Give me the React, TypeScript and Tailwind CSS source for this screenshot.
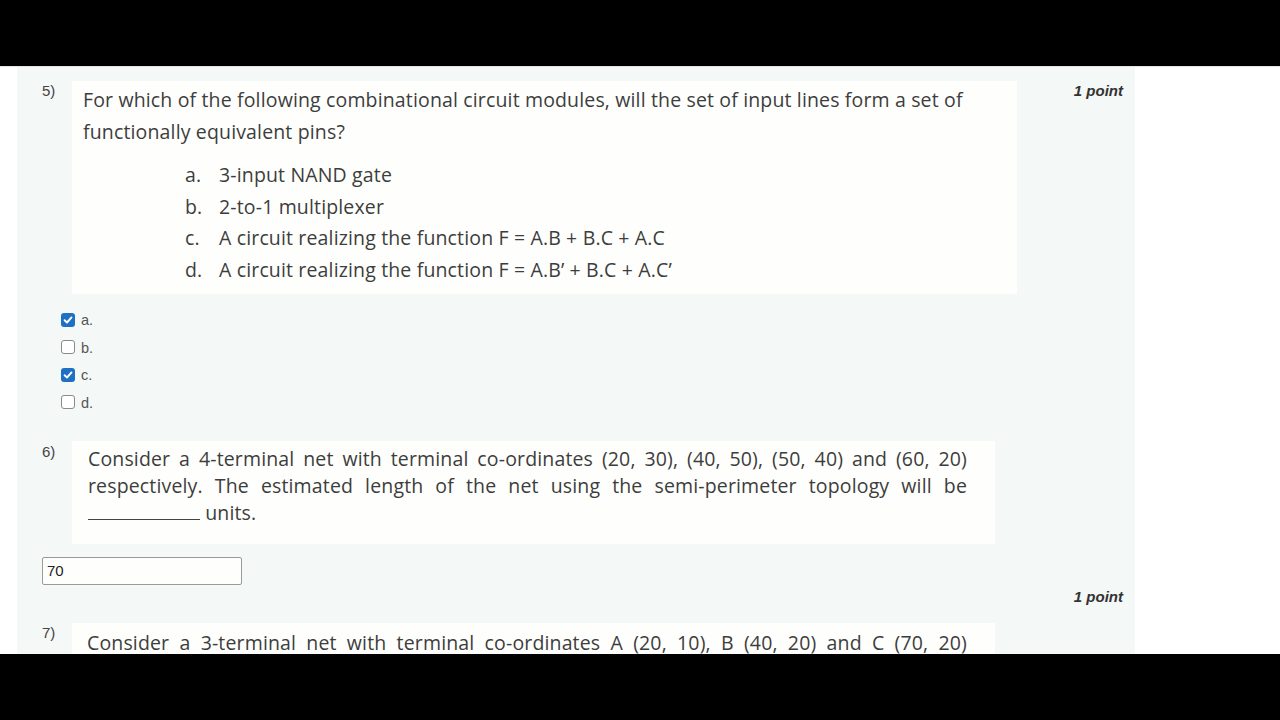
import React from 'react'

const serif = { fontFamily: '"Open Sans", "Noto Sans", sans-serif' }

function Check({ checked }: { checked: boolean }) {
  if (checked) {
    return (
      <span className="w-[14px] h-[14px] rounded-[3px] bg-[#1f6fc4] flex items-center justify-center">
        <svg width="10" height="10" viewBox="0 0 10 10">
          <path d="M1.6 5.2 L4 7.5 L8.5 2.4" stroke="white" strokeWidth="1.9" fill="none" strokeLinecap="round" strokeLinejoin="round" />
        </svg>
      </span>
    )
  }
  return <span className="w-[14px] h-[14px] rounded-[3px] bg-white border border-[#8a8a8a]" />
}

export default function App() {
  const options = [
    ['a.', '3-input NAND gate'],
    ['b.', '2-to-1 multiplexer'],
    ['c.', 'A circuit realizing the function F = A.B + B.C + A.C'],
    ['d.', 'A circuit realizing the function F = A.B’ + B.C + A.C’'],
  ]
  const answers = [
    ['a.', true],
    ['b.', false],
    ['c.', true],
    ['d.', false],
  ] as const

  return (
    <div className="w-[1280px] h-[720px] bg-black flex flex-col overflow-hidden">
      <div className="h-[66px] shrink-0" />
      <div className="h-[588px] shrink-0 bg-white flex overflow-hidden border-t border-[#e3e6e5]">
        <div className="w-[17px] shrink-0" />
        <div className="w-[1118px] shrink-0 bg-[#f4f8f6] pt-[14px] text-[#3d3d3d]" style={{ fontFamily: '"Liberation Sans", Arial, sans-serif' }}>
          {/* Question 5 */}
          <div className="flex items-start">
            <div className="w-[55px] shrink-0 pl-[25px] pt-[2px] text-[15px] leading-4 text-[#444]">5)</div>
            <div className="w-[945px] shrink-0 bg-[#fefffc] pl-[11px] pt-[3px] pb-[9px] text-[19.5px] tracking-[0.15px]" style={serif}>
              <div className="leading-[32px] whitespace-nowrap">
                For which of the following combinational circuit modules, will the set of input lines form a set of
              </div>
              <div className="leading-[32px] whitespace-nowrap">functionally equivalent pins?</div>
              <div className="mt-[11px] pl-[102px]">
                {options.map(([m, t]) => (
                  <div key={m} className="h-[31.5px] flex items-center whitespace-nowrap">
                    <span className="w-[34px]">{m}</span>
                    <span>{t}</span>
                  </div>
                ))}
              </div>
            </div>
            <div className="flex-1 text-right pr-[12px] pt-[2px] text-[15px] leading-4 font-bold italic text-[#333]">1 point</div>
          </div>

          {/* Answers for 5 */}
          <div className="mt-3 pl-[44px]">
            {answers.map(([l, c]) => (
              <div key={l} className="h-[27.5px] flex items-center gap-[6px]">
                <Check checked={c} />
                <span className="text-[14.5px] text-[#555] pt-[3px]">{l}</span>
              </div>
            ))}
          </div>

          {/* Question 6 */}
          <div className="mt-[25px] flex items-start">
            <div className="w-[55px] shrink-0 pl-[25px] pt-[3px] text-[15px] leading-4 text-[#444]">6)</div>
            <div className="w-[923px] shrink-0 bg-[#fefffc] pl-[16px] pr-[28px] pt-[3.5px] pb-[18.5px] text-[19.5px] leading-[27px] tracking-[0.15px]" style={serif}>
              <div className="[text-align-last:justify] whitespace-nowrap">
                Consider a 4-terminal net with terminal co-ordinates (20, 30), (40, 50), (50, 40) and (60, 20)
              </div>
              <div className="[text-align-last:justify] whitespace-nowrap">
                respectively. The estimated length of the net using the semi-perimeter topology will be
              </div>
              <div className="whitespace-nowrap">
                <span className="inline-block w-[112px] h-[18px] border-b border-[#444] align-baseline" /> units.
              </div>
            </div>
          </div>

          <div className="mt-[13px] pl-[25px]">
            <div className="w-[200px] h-[28px] bg-[#fefffc] border border-[#9a9a9a] rounded-[2px] flex items-center pl-[4px] text-[15px] text-[#222]">
              70
            </div>
          </div>

          <div className="mt-[4px] pr-[12px] text-right text-[15px] leading-4 font-bold italic text-[#333]">1 point</div>

          {/* Question 7 */}
          <div className="mt-[18px] flex items-start">
            <div className="w-[55px] shrink-0 pl-[25px] pt-[2px] text-[15px] leading-4 text-[#444]">7)</div>
            <div className="w-[923px] shrink-0 bg-[#fefffc] pl-[15px] pr-[28px] pt-[5.5px] h-[40px] text-[19.5px] leading-[27px] tracking-[0.15px]" style={serif}>
              <div className="[text-align-last:justify] whitespace-nowrap">
                Consider a 3-terminal net with terminal co-ordinates A (20, 10), B (40, 20) and C (70, 20)
              </div>
            </div>
          </div>
        </div>
        <div className="flex-1" />
      </div>
      <div className="flex-1" />
    </div>
  )
}
